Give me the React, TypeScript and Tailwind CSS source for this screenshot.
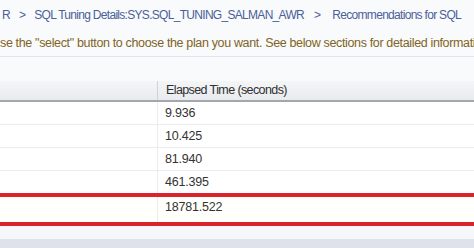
const rows = ["9.936", "10.425", "81.940", "461.395"];

export default function App() {
  return (
    <div
      className="relative h-[248px] w-[474px] overflow-hidden bg-[#f9fafc] text-[12.5px] tracking-[-0.35px]"
      style={{ fontFamily: "Tahoma, 'Liberation Sans', Arial, sans-serif" }}
    >
      {/* breadcrumb */}
      <div className="flex h-[30px] items-center whitespace-nowrap pl-[2px] text-[12px] tracking-[-0.7px] text-[#4b5f98]">
        <span>R</span>
        <span className="mx-[9px]">&gt;</span>
        <span>SQL Tuning Details:SYS.SQL_TUNING_SALMAN_AWR</span>
        <span className="ml-[10px] mr-[12px]">&gt;</span>
        <span>Recommendations for SQL</span>
      </div>

      {/* instruction */}
      <div className="flex h-[27px] items-center overflow-hidden whitespace-nowrap border-b border-[#dfe3ec] text-[#7f6424]">
        se the "select" button to choose the plan you want. See below sections for detailed information
      </div>

      <div className="h-[24px]" />

      {/* table */}
      <div className="grid h-[21px] grid-cols-[158px_1fr] border-b-2 border-[#a3a6ab] bg-gradient-to-b from-[#f4f5f7] to-[#e9ebee] text-[#2f2f2f]">
        <div className="border-r border-[#cfd2d6]" />
        <div className="flex items-center whitespace-nowrap pl-[8px] tracking-[-0.6px]">Elapsed Time (seconds)</div>
      </div>

      {rows.map((v, i) => (
        <div
          key={v}
          className={`grid grid-cols-[158px_1fr] bg-white text-[#333] tracking-[-0.2px] ${i === 3 ? "h-[22px]" : "h-[23px] border-b border-[#ececec]"}`}
        >
          <div className="border-r border-[#ececec]" />
          <div className="flex items-center pl-[7px]">{v}</div>
        </div>
      ))}

      <div className="h-[4px] bg-[#dc222c]" />
      <div className="grid h-[25px] grid-cols-[158px_1fr] bg-[#fffffb] text-[#333] tracking-[-0.2px]">
        <div className="border-r border-[#ececec]" />
        <div className="flex items-center pb-[4px] pl-[7px]">18781.522</div>
      </div>
      <div className="h-[4px] bg-[#dc222c]" />

      <div className="h-[13px] bg-[#f6f7fb]" />
      <div className="h-[9px] bg-[#dfe2ea]" />
    </div>
  );
}
